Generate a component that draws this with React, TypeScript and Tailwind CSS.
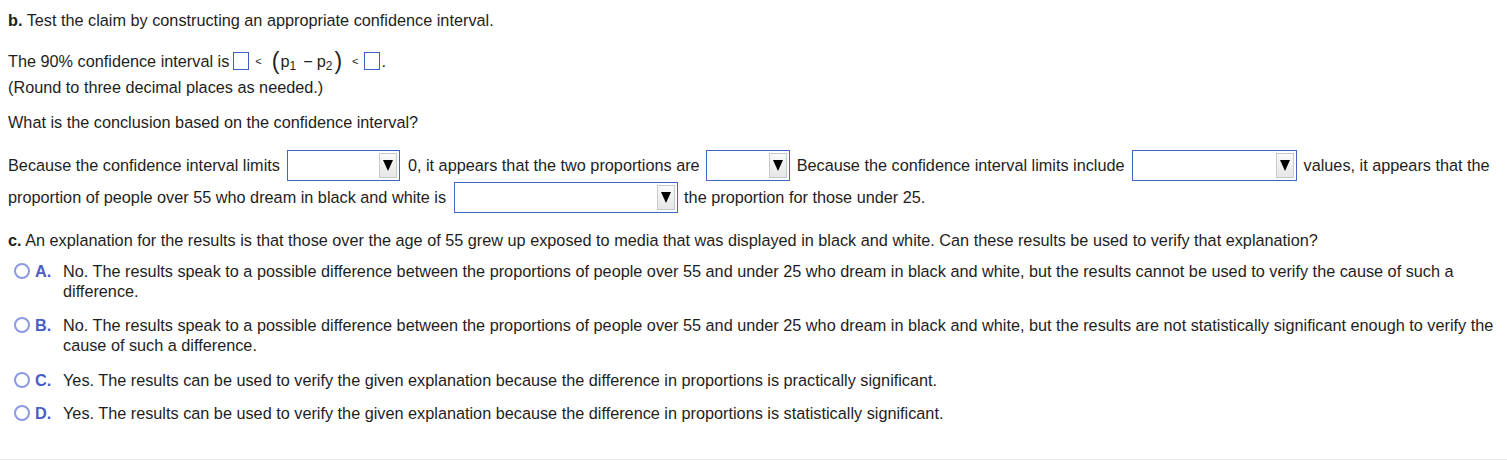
import React from 'react';

function AnswerBox() {
  return <span className="inline-block h-[18px] w-[16px] border border-[#3d5fc4] bg-white align-middle" />;
}

function Dropdown({ width }: { width: string }) {
  return (
    <span className={`flex h-[31px] ${width} items-center justify-end border border-[#4266c6] bg-white pr-[2px]`}>
      <span className="flex h-[25px] w-[18px] items-center justify-center border border-[#c9c9c9] bg-gradient-to-b from-[#fafafa] to-[#e6e6e6]">
        <svg width="10" height="12" viewBox="0 0 10 12">
          <polygon points="0,1 10,1 5,12" fill="#000" />
        </svg>
      </span>
    </span>
  );
}

interface Choice {
  letter: string;
  lines: string[];
  mt: string;
}

const choices: Choice[] = [
  {
    letter: 'A.',
    mt: 'mt-[11px]',
    lines: [
      'No. The results speak to a possible difference between the proportions of people over 55 and under 25 who dream in black and white, but the results cannot be used to verify the cause of such a',
      'difference.',
    ],
  },
  {
    letter: 'B.',
    mt: 'mt-[14px]',
    lines: [
      'No. The results speak to a possible difference between the proportions of people over 55 and under 25 who dream in black and white, but the results are not statistically significant enough to verify the',
      'cause of such a difference.',
    ],
  },
  {
    letter: 'C.',
    mt: 'mt-[15px]',
    lines: ['Yes. The results can be used to verify the given explanation because the difference in proportions is practically significant.'],
  },
  {
    letter: 'D.',
    mt: 'mt-[13px]',
    lines: ['Yes. The results can be used to verify the given explanation because the difference in proportions is statistically significant.'],
  },
];

export default function App() {
  return (
    <div
      className="h-[461px] w-[1507px] overflow-hidden bg-white text-[16.25px] text-[#1e1e1e]"
      style={{ fontFamily: '"Liberation Sans", Arial, sans-serif' }}
    >
      <div className="h-[460px] border-b border-[#ececec] px-2 pt-[10px]">
        {/* part b */}
        <p className="h-5 leading-5 whitespace-nowrap">
          <b>b.</b> Test the claim by constructing an appropriate confidence interval.
        </p>

        <div className="mt-[19px] flex h-6 items-center whitespace-nowrap">
          <span>The 90% confidence interval is</span>
          <span className="ml-[4px] flex items-center">
            <AnswerBox />
          </span>
          <span className="ml-[6px] text-[11px]">&lt;</span>
          <span className="ml-[10px] flex items-center">
            <span className="text-[23px] leading-none">(</span>
            <span className="ml-[1px]">
              p<sub className="text-[12px]">1</sub>
            </span>
            <span className="ml-[7px] mr-[4px]">−</span>
            <span>
              p<sub className="text-[12px]">2</sub>
            </span>
            <span className="ml-[2px] text-[23px] leading-none">)</span>
          </span>
          <span className="ml-[10px] text-[11px]">&lt;</span>
          <span className="ml-[5px] flex items-center">
            <AnswerBox />
          </span>
          <span className="ml-[2px]">.</span>
        </div>

        <p className="mt-[4px] h-5 leading-5">(Round to three decimal places as needed.)</p>

        <p className="mt-[15px] h-5 leading-5">What is the conclusion based on the confidence interval?</p>

        <div className="mt-[17px] flex h-[32px] items-center whitespace-nowrap">
          <span>Because the confidence interval limits</span>
          <span className="ml-[7px]">
            <Dropdown width="w-[113px]" />
          </span>
          <span className="ml-[8px]">0, it appears that the two proportions are</span>
          <span className="ml-[6px]">
            <Dropdown width="w-[84px]" />
          </span>
          <span className="ml-[7px]">Because the confidence interval limits include</span>
          <span className="ml-[7px]">
            <Dropdown width="w-[165px]" />
          </span>
          <span className="ml-[7px]">values, it appears that the</span>
        </div>
        <div className="flex h-[32px] items-center whitespace-nowrap">
          <span>proportion of people over 55 who dream in black and white is</span>
          <span className="ml-[8px]">
            <Dropdown width="w-[224px]" />
          </span>
          <span className="ml-[6px]">the proportion for those under 25.</span>
        </div>

        {/* part c */}
        <p className="mt-[17px] h-5 leading-5 whitespace-nowrap">
          <b>c.</b> An explanation for the results is that those over the age of 55 grew up exposed to media that was
          displayed in black and white. Can these results be used to verify that explanation?
        </p>

        {choices.map((c) => (
          <div key={c.letter} className={`${c.mt} flex items-start`}>
            <span className="ml-[6px] mt-[2px] h-[16px] w-[16px] shrink-0 rounded-full border-2 border-[#8d9ae0] bg-white" />
            <span className="ml-[5px] w-[28px] shrink-0 font-bold leading-5 text-[#4a5cc8]">{c.letter}</span>
            <div className="leading-5 whitespace-nowrap">
              {c.lines.map((l) => (
                <div key={l}>{l}</div>
              ))}
            </div>
          </div>
        ))}
      </div>
    </div>
  );
}
